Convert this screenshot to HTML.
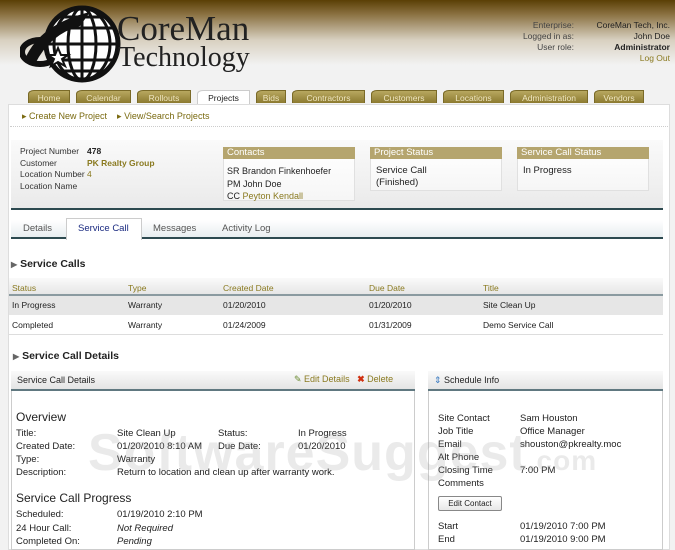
<!DOCTYPE html>
<html><head><meta charset="utf-8"><style>
*{margin:0;padding:0;box-sizing:border-box}
body{width:675px;height:550px;overflow:hidden;font-family:"Liberation Sans",Arial,sans-serif;font-size:9px;color:#222;position:relative;background:linear-gradient(#5a3f05 0px,#8a7040 14px,#d8d0c0 40px,#f2f2f2 65px,#f2f2f2 100%)}
.a{position:absolute;white-space:nowrap}
.tab{position:absolute;top:90px;height:13px;background:linear-gradient(#b8a860,#8c7a30);color:#efe6c0;font-size:8.5px;text-align:center;line-height:14px;border-top-left-radius:6px 4px;border:1px solid #7a6a28;border-bottom:none}
.gold{color:#8a7a20}
.hdr{position:absolute;height:12px;background:#b5a56e;color:#fff;font-size:9.5px;padding-left:4px;line-height:12px}
.box{position:absolute;background:linear-gradient(#fff,#f6f6f6);border:1px solid #e0e0e0}
b{font-weight:bold}
</style></head><body>
<svg class="a" style="left:20px;top:4px" width="110" height="82" viewBox="0 0 110 82">
<ellipse cx="20" cy="48" rx="18" ry="12" fill="none" stroke="#111" stroke-width="6"/>
<circle cx="62" cy="40" r="36" fill="#fff" stroke="#111" stroke-width="5"/>
<g stroke="#111" stroke-width="3" fill="none">
<ellipse cx="62" cy="40" rx="14" ry="36"/><ellipse cx="62" cy="40" rx="28" ry="36"/>
<line x1="62" y1="4" x2="62" y2="76"/><line x1="26" y1="40" x2="98" y2="40"/>
<line x1="30" y1="24" x2="94" y2="24"/><line x1="30" y1="56" x2="94" y2="56"/>
<line x1="38" y1="13" x2="86" y2="13"/><line x1="38" y1="67" x2="86" y2="67"/></g>
<path d="M5 55 Q20 20 70 8 L60 22 Q30 30 15 60Z" fill="#111"/>
<polygon points="38,44 41,51 48,51 42,55 45,62 38,58 31,62 34,55 28,51 35,51" fill="#fff" stroke="#111" stroke-width="2"/>
</svg>
<div class="a" style="left:117px;top:12px;font-family:'Liberation Serif',serif;font-size:35px;color:#222;line-height:34px">CoreMan</div>
<div class="a" style="left:118px;top:44px;font-family:'Liberation Serif',serif;font-size:28px;color:#222;line-height:28px">Technology</div>
<div class="a" style="left:520px;top:20px;font-size:8.5px;color:#444;text-align:right;width:54px;line-height:11px">Enterprise:<br>Logged in as:<br>User role:</div>
<div class="a" style="left:580px;top:20px;font-size:8.5px;color:#222;text-align:right;width:90px;line-height:11px">CoreMan Tech, Inc.<br>John Doe<br><b>Administrator</b><br><span class="gold">Log Out</span></div>
<div class="tab" style="left:28px;width:42px">Home</div>
<div class="tab" style="left:76px;width:55px">Calendar</div>
<div class="tab" style="left:137px;width:54px">Rollouts</div>
<div class="tab" style="left:197px;width:53px;background:#fff;color:#222;border-color:#ccc;height:15px">Projects</div>
<div class="tab" style="left:256px;width:30px">Bids</div>
<div class="tab" style="left:292px;width:73px">Contractors</div>
<div class="tab" style="left:371px;width:66px">Customers</div>
<div class="tab" style="left:443px;width:61px">Locations</div>
<div class="tab" style="left:510px;width:78px">Administration</div>
<div class="tab" style="left:594px;width:50px">Vendors</div>
<div class="a" style="left:8px;top:104px;width:662px;height:446px;background:#fff;border:1px solid #ddd"></div>
<div class="a" style="left:22px;top:111px;font-size:9px;color:#7a6a10">▸ Create New Project &nbsp;&nbsp; ▸ View/Search Projects</div>
<div class="a" style="left:10px;top:126px;width:658px;border-top:1px dotted #ccc"></div>
<div class="a" style="left:11px;top:140px;width:652px;height:70px;background:linear-gradient(#fafafa,#eaeaea);border-bottom:2px solid #2d4a50"></div>
<div class="a" style="left:20px;top:146px;font-size:8.5px;line-height:11.5px;color:#333">Project Number<br>Customer<br>Location Number<br>Location Name</div>
<div class="a" style="left:87px;top:146px;font-size:8.5px;line-height:11.5px"><b>478</b><br><b class="gold">PK Realty Group</b><br><span class="gold">4</span></div>
<div class="box" style="left:223px;top:147px;width:132px;height:54px"></div>
<div class="hdr" style="left:223px;top:147px;width:132px">Contacts</div>
<div class="a" style="left:227px;top:165px;font-size:9px;line-height:12.5px">SR Brandon Finkenhoefer<br>PM John Doe<br>CC <span class="gold">Peyton Kendall</span></div>
<div class="box" style="left:370px;top:147px;width:132px;height:44px"></div>
<div class="hdr" style="left:370px;top:147px;width:132px">Project Status</div>
<div class="a" style="left:376px;top:165px;font-size:9.5px;line-height:12px">Service Call<br>(Finished)</div>
<div class="box" style="left:517px;top:147px;width:132px;height:44px"></div>
<div class="hdr" style="left:517px;top:147px;width:132px">Service Call Status</div>
<div class="a" style="left:523px;top:165px;font-size:9.5px">In Progress</div>
<div class="a" style="left:11px;top:220px;width:652px;height:19px;background:linear-gradient(#fff,#e8eef0);border-bottom:2px solid #2d4a50"></div>
<div class="a" style="left:66px;top:218px;width:76px;height:22px;background:#fff;border:1px solid #ccc;border-bottom:none"></div>
<div class="a" style="left:23px;top:223px;font-size:9.5px;color:#555">Details</div>
<div class="a" style="left:78px;top:223px;font-size:9.5px;color:#1a2a80">Service Call</div>
<div class="a" style="left:153px;top:223px;font-size:9.5px;color:#555">Messages</div>
<div class="a" style="left:222px;top:223px;font-size:9.5px;color:#555">Activity Log</div>
<div class="a" style="left:11px;top:258px;font-size:10.5px;font-weight:bold;color:#222"><span style="color:#666;font-size:8px">▶</span> Service Calls</div>
<div class="a" style="left:9px;top:278px;width:654px;height:18px;background:linear-gradient(#fafafa,#e6e6e6);border-bottom:2px solid #8a9aa0"></div>
<div class="a" style="left:9px;top:296px;width:654px;height:19px;background:#e6e6e6"></div>
<div class="a" style="left:9px;top:334px;width:654px;border-top:1px solid #ddd"></div>
<div class="a gold" style="left:12px;top:283px;font-size:8.5px">Status</div>
<div class="a gold" style="left:128px;top:283px;font-size:8.5px">Type</div>
<div class="a gold" style="left:223px;top:283px;font-size:8.5px">Created Date</div>
<div class="a gold" style="left:369px;top:283px;font-size:8.5px">Due Date</div>
<div class="a gold" style="left:483px;top:283px;font-size:8.5px">Title</div>
<div class="a" style="left:12px;top:300px;font-size:8.5px">In Progress</div><div class="a" style="left:128px;top:300px;font-size:8.5px">Warranty</div><div class="a" style="left:223px;top:300px;font-size:8.5px">01/20/2010</div><div class="a" style="left:369px;top:300px;font-size:8.5px">01/20/2010</div><div class="a" style="left:483px;top:300px;font-size:8.5px">Site Clean Up</div>
<div class="a" style="left:12px;top:320px;font-size:8.5px">Completed</div><div class="a" style="left:128px;top:320px;font-size:8.5px">Warranty</div><div class="a" style="left:223px;top:320px;font-size:8.5px">01/24/2009</div><div class="a" style="left:369px;top:320px;font-size:8.5px">01/31/2009</div><div class="a" style="left:483px;top:320px;font-size:8.5px">Demo Service Call</div>
<div class="a" style="left:13px;top:350px;font-size:10.5px;font-weight:bold"><span style="color:#666;font-size:8px">▶</span> Service Call Details</div>
<div class="a" style="left:11px;top:371px;width:404px;height:179px;border:1px solid #ccc;background:#fff"></div>
<div class="a" style="left:11px;top:371px;width:404px;height:20px;background:linear-gradient(#fafafa,#e4e4e4);border-bottom:2px solid #607880"></div>
<div class="a" style="left:17px;top:375px;font-size:9px">Service Call Details</div>
<div class="a" style="left:294px;top:374px;font-size:9px;color:#8a7a20"><span style="color:#6a8a30">✎</span> Edit Details &nbsp; <span style="color:#d03010;font-weight:bold">✖</span> <span style="color:#8a7a20">Delete</span></div>
<div class="a" style="left:16px;top:410px;font-size:12px">Overview</div>
<div class="a" style="left:16px;top:427px;font-size:9.5px;line-height:13px">Title:<br>Created Date:<br>Type:<br>Description:</div>
<div class="a" style="left:117px;top:427px;font-size:9.5px;line-height:13px">Site Clean Up<br>01/20/2010 8:10 AM<br>Warranty<br>Return to location and clean up after warranty work.</div>
<div class="a" style="left:218px;top:427px;font-size:9.5px;line-height:13px">Status:<br>Due Date:</div>
<div class="a" style="left:298px;top:427px;font-size:9.5px;line-height:13px">In Progress<br>01/20/2010</div>
<div class="a" style="left:16px;top:491px;font-size:12px">Service Call Progress</div>
<div class="a" style="left:16px;top:508px;font-size:9.5px;line-height:13.5px">Scheduled:<br>24 Hour Call:<br>Completed On:</div>
<div class="a" style="left:117px;top:508px;font-size:9.5px;line-height:13.5px">01/19/2010 2:10 PM<br><i>Not Required</i><br><i>Pending</i></div>
<div class="a" style="left:428px;top:371px;width:235px;height:179px;border:1px solid #ccc;background:#fff"></div>
<div class="a" style="left:428px;top:371px;width:235px;height:20px;background:linear-gradient(#fafafa,#e4e4e4);border-bottom:2px solid #607880"></div>
<div class="a" style="left:434px;top:375px;font-size:9px"><span style="color:#3a7ac0">⇕</span> Schedule Info</div>
<div class="a" style="left:438px;top:412px;font-size:9.5px;line-height:13px">Site Contact<br>Job Title<br>Email<br>Alt Phone<br>Closing Time<br>Comments</div>
<div class="a" style="left:520px;top:412px;font-size:9.5px;line-height:13px">Sam Houston<br>Office Manager<br>shouston@pkrealty.moc<br><br>7:00 PM</div>
<div class="a" style="left:438px;top:496px;width:64px;height:15px;border:1px solid #888;border-radius:2px;background:linear-gradient(#fff,#e8e8e8);font-size:8px;text-align:center;line-height:13px">Edit Contact</div>
<div class="a" style="left:438px;top:520px;font-size:9.5px;line-height:13px">Start<br>End</div>
<div class="a" style="left:520px;top:520px;font-size:9.5px;line-height:13px">01/19/2010 7:00 PM<br>01/19/2010 9:00 PM</div>
<div class="a" style="left:88px;top:423px;font-size:52px;font-weight:bold;color:rgba(150,150,150,0.2);letter-spacing:1px">SoftwareSuggest<span style="font-size:28px">.com</span></div>
</body></html>
